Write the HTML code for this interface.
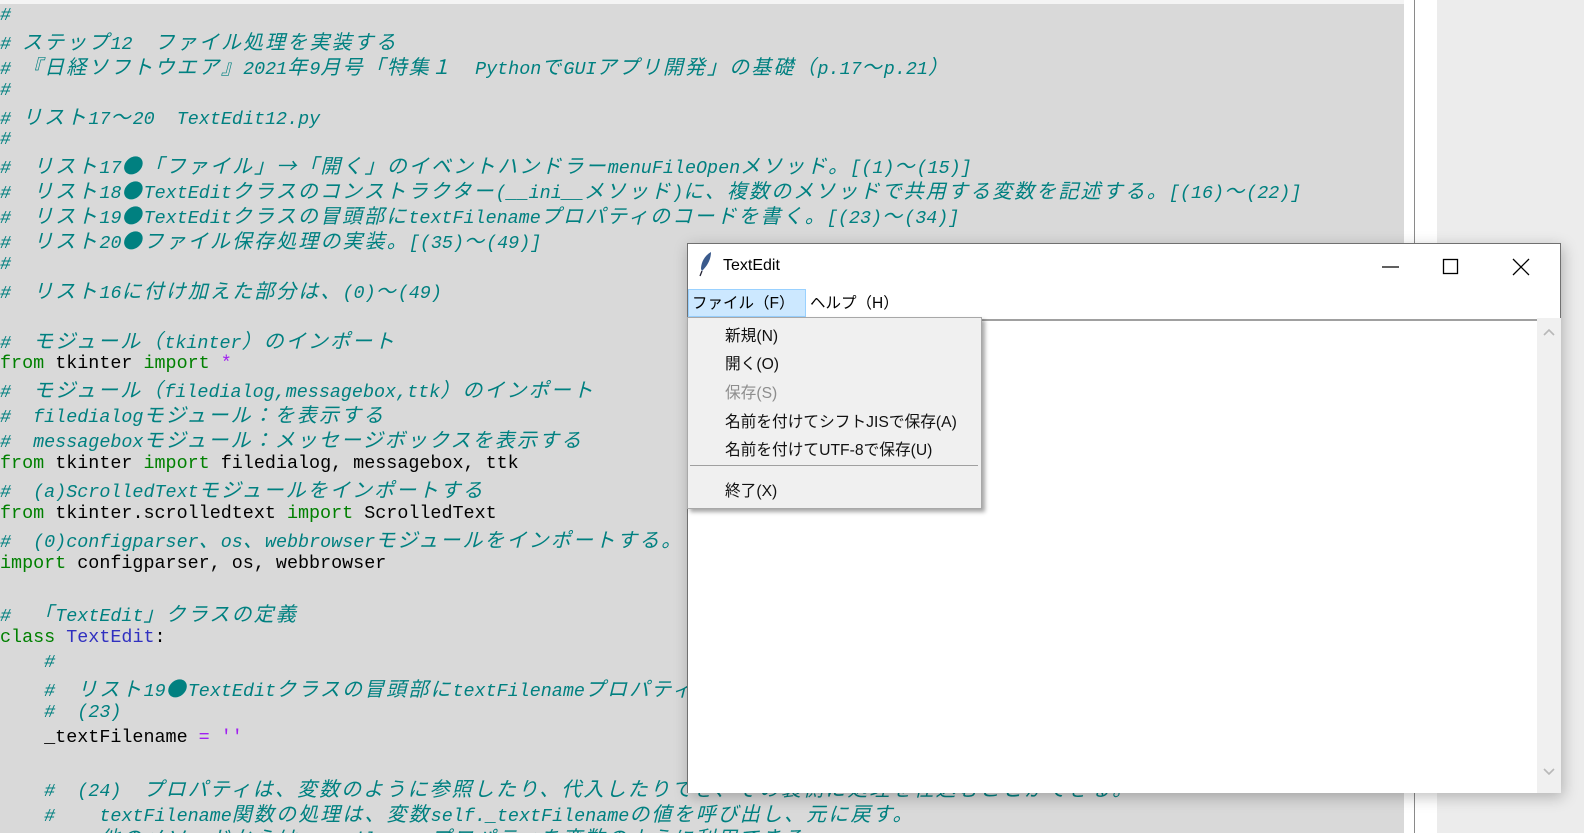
<!DOCTYPE html>
<html><head><meta charset="utf-8"><style>
*{margin:0;padding:0;box-sizing:border-box}
html,body{width:1584px;height:833px;overflow:hidden;background:#ececec;position:relative}
#code{position:absolute;left:0;top:4px;width:1404px;height:830px;background:#d9d9d9;overflow:hidden;font-family:"Liberation Mono","Noto Sans CJK JP",monospace;font-size:18.4px;color:#000}
.topstrip{position:absolute;left:0;top:0;width:1404px;height:4px;background:#f4f4f4}
.l{height:24.9px;line-height:24.9px;white-space:pre}
.c{color:#008080;font-style:italic}
.k{color:#008000}
.p{color:#a020f0}
.b{color:#3030c0}
.j{font-size:20px;letter-spacing:2.1px;font-family:"Noto Sans CJK JP",sans-serif}
#strip1{position:absolute;left:1404px;top:0;width:33px;height:833px;background:#fff}
#strip1line{position:absolute;left:1414px;top:0;width:1px;height:833px;background:#8a8a8a}
#win{position:absolute;left:687px;top:243px;width:874px;height:550px;background:#fff;border:1px solid #707070;box-shadow:2px 4px 14px rgba(0,0,0,.25);font-family:"Liberation Sans","Noto Sans CJK JP",sans-serif}
.title{position:absolute;left:35px;top:13px;font-size:16px;color:#000}
.menu1{position:absolute;left:0;top:45px;width:118px;height:28px;background:#cce8ff;border:1px solid #99d1ff}
.mi{position:absolute;top:47px;font-size:15.5px;color:#000}
.txt{position:absolute;left:0;top:75px;width:849px;height:474px;border-top:2px solid #a0a0a0;background:#fff}
.sb{position:absolute;left:849px;top:74px;width:24px;height:475px;background:#f0f0f0}
#dd{position:absolute;left:687px;top:317px;width:295px;height:192px;background:#f0f0f0;border:1px solid #a8a8a8;box-shadow:3px 3px 4px rgba(0,0,0,.35);font-family:"Liberation Sans","Noto Sans CJK JP",sans-serif;font-size:15.7px}
.d{position:absolute;left:37px;color:#111;white-space:nowrap}
.sep{position:absolute;left:2px;width:288px;top:147px;height:1px;background:#a0a0a0}
</style></head><body>
<div class="topstrip"></div>
<div id="code">
<div class="l c">#</div>
<div class="l c"># ステップ12  ファイル処理を実装する</div>
<div class="l c"># 『日経ソフトウエア』2021年9月号「特集１  PythonでGUIアプリ開発」の基礎（p.17～p.21）</div>
<div class="l c">#</div>
<div class="l c"># リスト17～20  TextEdit12.py</div>
<div class="l c">#</div>
<div class="l c">#  リスト17●「ファイル」→「開く」のイベントハンドラーmenuFileOpenメソッド。[(1)～(15)]</div>
<div class="l c">#  リスト18●TextEditクラスのコンストラクター(__ini__メソッド)に、複数のメソッドで共用する変数を記述する。[(16)～(22)]</div>
<div class="l c">#  リスト19●TextEditクラスの冒頭部にtextFilenameプロパティのコードを書く。[(23)～(34)]</div>
<div class="l c">#  リスト20●ファイル保存処理の実装。[(35)～(49)]</div>
<div class="l c">#</div>
<div class="l c">#  リスト16に付け加えた部分は、(0)～(49)</div>
<div class="l"> </div>
<div class="l c">#  モジュール（tkinter）のインポート</div>
<div class="l"><span class="k">from</span> tkinter <span class="k">import</span> <span class="p">*</span></div>
<div class="l c">#  モジュール（filedialog,messagebox,ttk）のインポート</div>
<div class="l c">#  filedialogモジュール：を表示する</div>
<div class="l c">#  messageboxモジュール：メッセージボックスを表示する</div>
<div class="l"><span class="k">from</span> tkinter <span class="k">import</span> filedialog, messagebox, ttk</div>
<div class="l c">#  (a)ScrolledTextモジュールをインポートする</div>
<div class="l"><span class="k">from</span> tkinter.scrolledtext <span class="k">import</span> ScrolledText</div>
<div class="l c">#  (0)configparser、os、webbrowserモジュールをインポートする。</div>
<div class="l"><span class="k">import</span> configparser, os, webbrowser</div>
<div class="l"> </div>
<div class="l c">#  「TextEdit」クラスの定義</div>
<div class="l"><span class="k">class</span> <span class="b">TextEdit</span>:</div>
<div class="l c">    #</div>
<div class="l c">    #  リスト19●TextEditクラスの冒頭部にtextFilenameプロパティのコードを書く。</div>
<div class="l c">    #  (23)</div>
<div class="l">    _textFilename <span class="p">=</span> <span class="p">''</span></div>
<div class="l"> </div>
<div class="l c">    #  (24)  プロパティは、変数のように参照したり、代入したりでき、その裏側に処理を仕込むことができる。</div>
<div class="l c">    #    textFilename関数の処理は、変数self._textFilenameの値を呼び出し、元に戻す。</div>
<div class="l c">    #    他のメソッドからはtextFilenameプロパティを変数のように利用できる。</div>
</div>
<div id="strip1"></div><div id="strip1line"></div>
<div id="win">
<svg style="position:absolute;left:10px;top:7px" width="16" height="26" viewBox="0 0 16 26"><path d="M13 1 C6 5 3 12 3 18 L4 20 C9 15 13 9 13 1Z" fill="#3a5a8c"/><path d="M4 20 L2 25" stroke="#223" stroke-width="1.3"/></svg>
<div class="title">TextEdit</div>
<svg style="position:absolute;left:694px;top:13px" width="190" height="24"><line x1="0" y1="10" x2="17" y2="10" stroke="#000" stroke-width="1.2"/><rect x="61.5" y="2.5" width="14" height="14" fill="none" stroke="#000" stroke-width="1.3"/><path d="M131 2 L147 18 M147 2 L131 18" stroke="#000" stroke-width="1.3"/></svg>
<div class="menu1"></div>
<div class="mi" style="left:4px">ファイル（F）</div>
<div class="mi" style="left:122px">ヘルプ（H）</div>
<div class="txt"></div>
<div class="sb"><svg style="position:absolute;left:6px;top:10px" width="12" height="8"><path d="M1 7 L6 2 L11 7" fill="none" stroke="#b8b8b8" stroke-width="1.6"/></svg><svg style="position:absolute;left:6px;top:450px" width="12" height="8"><path d="M1 1 L6 6 L11 1" fill="none" stroke="#b8b8b8" stroke-width="1.6"/></svg></div>
</div>
<div id="dd">
<div class="d" style="top:5px">新規(N)</div>
<div class="d" style="top:33px">開く(O)</div>
<div class="d" style="top:62px;color:#8d8d8d">保存(S)</div>
<div class="d" style="top:91px">名前を付けてシフトJISで保存(A)</div>
<div class="d" style="top:119px">名前を付けてUTF-8で保存(U)</div>
<div class="sep"></div>
<div class="d" style="top:160px">終了(X)</div>
</div>
<script>
document.querySelectorAll('#code .l').forEach(function(l){
  var w=document.createTreeWalker(l,NodeFilter.SHOW_TEXT),ns=[],n;
  while(n=w.nextNode())ns.push(n);
  ns.forEach(function(t){
    var s=t.nodeValue;if(!/[^\x00-\x7f]/.test(s))return;
    var f=document.createDocumentFragment();
    s.split(/([^\x00-\x7f]+)/).forEach(function(p,i){
      if(!p)return;
      if(i%2){var sp=document.createElement('span');sp.className='j';sp.textContent=p;f.appendChild(sp);}
      else f.appendChild(document.createTextNode(p));
    });
    t.parentNode.replaceChild(f,t);
  });
});
</script>
</body></html>
